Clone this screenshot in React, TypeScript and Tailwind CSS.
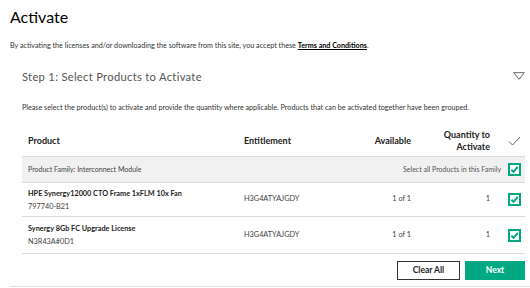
import React from 'react';

type Row = { name: string; sku: string; entitlement: string; available: string; qty: string };

const rows: Row[] = [
  { name: 'HPE Synergy12000 CTO Frame 1xFLM 10x Fan', sku: '797740-B21', entitlement: 'H3G4ATYAJGDY', available: '1 of 1', qty: '1' },
  { name: 'Synergy 8Gb FC Upgrade License', sku: 'N3R43A#0D1', entitlement: 'H3G4ATYAJGDY', available: '1 of 1', qty: '1' },
];

/* ── checkbox marcado ─────────────────────────────── */
function Checkbox() {
  return (
    <span className="flex h-[13px] w-[13px] items-center justify-center border-2 border-[#01a982] bg-white">
      <svg viewBox="0 0 10 10" className="h-[9px] w-[9px]">
        <path d="M1.5 5.2 L4 7.6 L8.6 2.2" fill="none" stroke="#01a982" strokeWidth="2.2" />
      </svg>
    </span>
  );
}

export default function App() {
  return (
    <div className="h-[288px] w-[530px] overflow-hidden bg-white text-[#222]" style={{ fontFamily: 'Lato, "Noto Sans", sans-serif' }}>
      <div className="pl-[10px] pt-[7px]">
        <h1 className="text-[16px] leading-[20px] font-normal text-black">Activate</h1>
        <p className="mt-[14px] text-[7.2px] leading-[10px] text-[#333]">
          By activating the licenses and/or downloading the software from this site, you accept these{' '}
          <a className="font-bold text-black underline">Terms and Conditions</a>.
        </p>

        {/* ── §1 Paso 1 ─────────────────────────────── */}
        <section className="border-b border-[#e2e2e2] pl-[12px] pr-[5px] pb-[6px]">
          <div className="mt-[16px] flex h-[20px] items-center justify-between">
            <h2 className="text-[11.2px] tracking-[0.3px] text-[#555]">Step 1: Select Products to Activate</h2>
            <svg viewBox="0 0 12 8" className="mb-[2px] h-[8px] w-[12px]">
              <path d="M0.7 0.7 H11.3 L6 7.3 Z" fill="none" stroke="#666" strokeWidth="1" />
            </svg>
          </div>
          <p className="mt-[16px] text-[7.2px] leading-[10px] text-[#333]">
            Please select the product(s) to activate and provide the quantity where applicable. Products that can be activated together have been grouped.
          </p>

          {/* tabla */}
          <div className="mt-[13px] text-[#222]">
            <div className="flex h-[30px] items-center text-[9px] font-bold leading-[12px]">
              <div className="w-[216px] pl-[6px]">Product</div>
              <div className="w-[118px] pl-[6px]">Entitlement</div>
              <div className="w-[55px] text-right">Available</div>
              <div className="w-[79px] text-right">Quantity to<br />Activate</div>
              <div className="flex w-[35px] pl-[18px]">
                <svg viewBox="0 0 13 10" className="h-[10px] w-[13px]">
                  <path d="M1 5.5 L4.5 9 L12 1" fill="none" stroke="#555" strokeWidth="0.9" />
                </svg>
              </div>
            </div>

            <div className="flex h-[26px] items-center justify-between border-t border-[#dcdcdc] bg-[#f1f1f1] pl-[6px] text-[7px] text-[#444]">
              <span>Product Family: Interconnect Module</span>
              <div className="flex items-center">
                <span className="mr-[7px] text-[#555]">Select all Products in this Family</span>
                <div className="w-[17px]"><Checkbox /></div>
              </div>
            </div>

            {rows.map((r, i) => (
              <div key={r.sku} className={`flex items-center border-b border-[#dcdcdc] text-[7.3px] ${i === 0 ? 'h-[35px] border-t' : 'h-[37px]'}`}>
                <div className="w-[216px] pl-[6px]">
                  <div className="font-bold leading-[13px]">{r.name}</div>
                  <div className="leading-[13px] text-[#444]">{r.sku}</div>
                </div>
                <div className="w-[118px] pl-[6px] text-[#444]">{r.entitlement}</div>
                <div className="w-[55px] text-right text-[#444]">{r.available}</div>
                <div className="w-[79px] text-right text-[#444]">{r.qty}</div>
                <div className="flex w-[35px] pl-[18px]"><Checkbox /></div>
              </div>
            ))}
          </div>

          <div className="mt-[7px] flex justify-end gap-[5px]">
            <button className="h-[19px] w-[63px] border border-[#333] bg-white text-[8.5px] font-bold text-[#222]">Clear All</button>
            <button className="h-[19px] w-[60px] bg-[#01a982] text-[8.5px] font-bold text-white">Next</button>
          </div>
        </section>
      </div>
    </div>
  );
}
